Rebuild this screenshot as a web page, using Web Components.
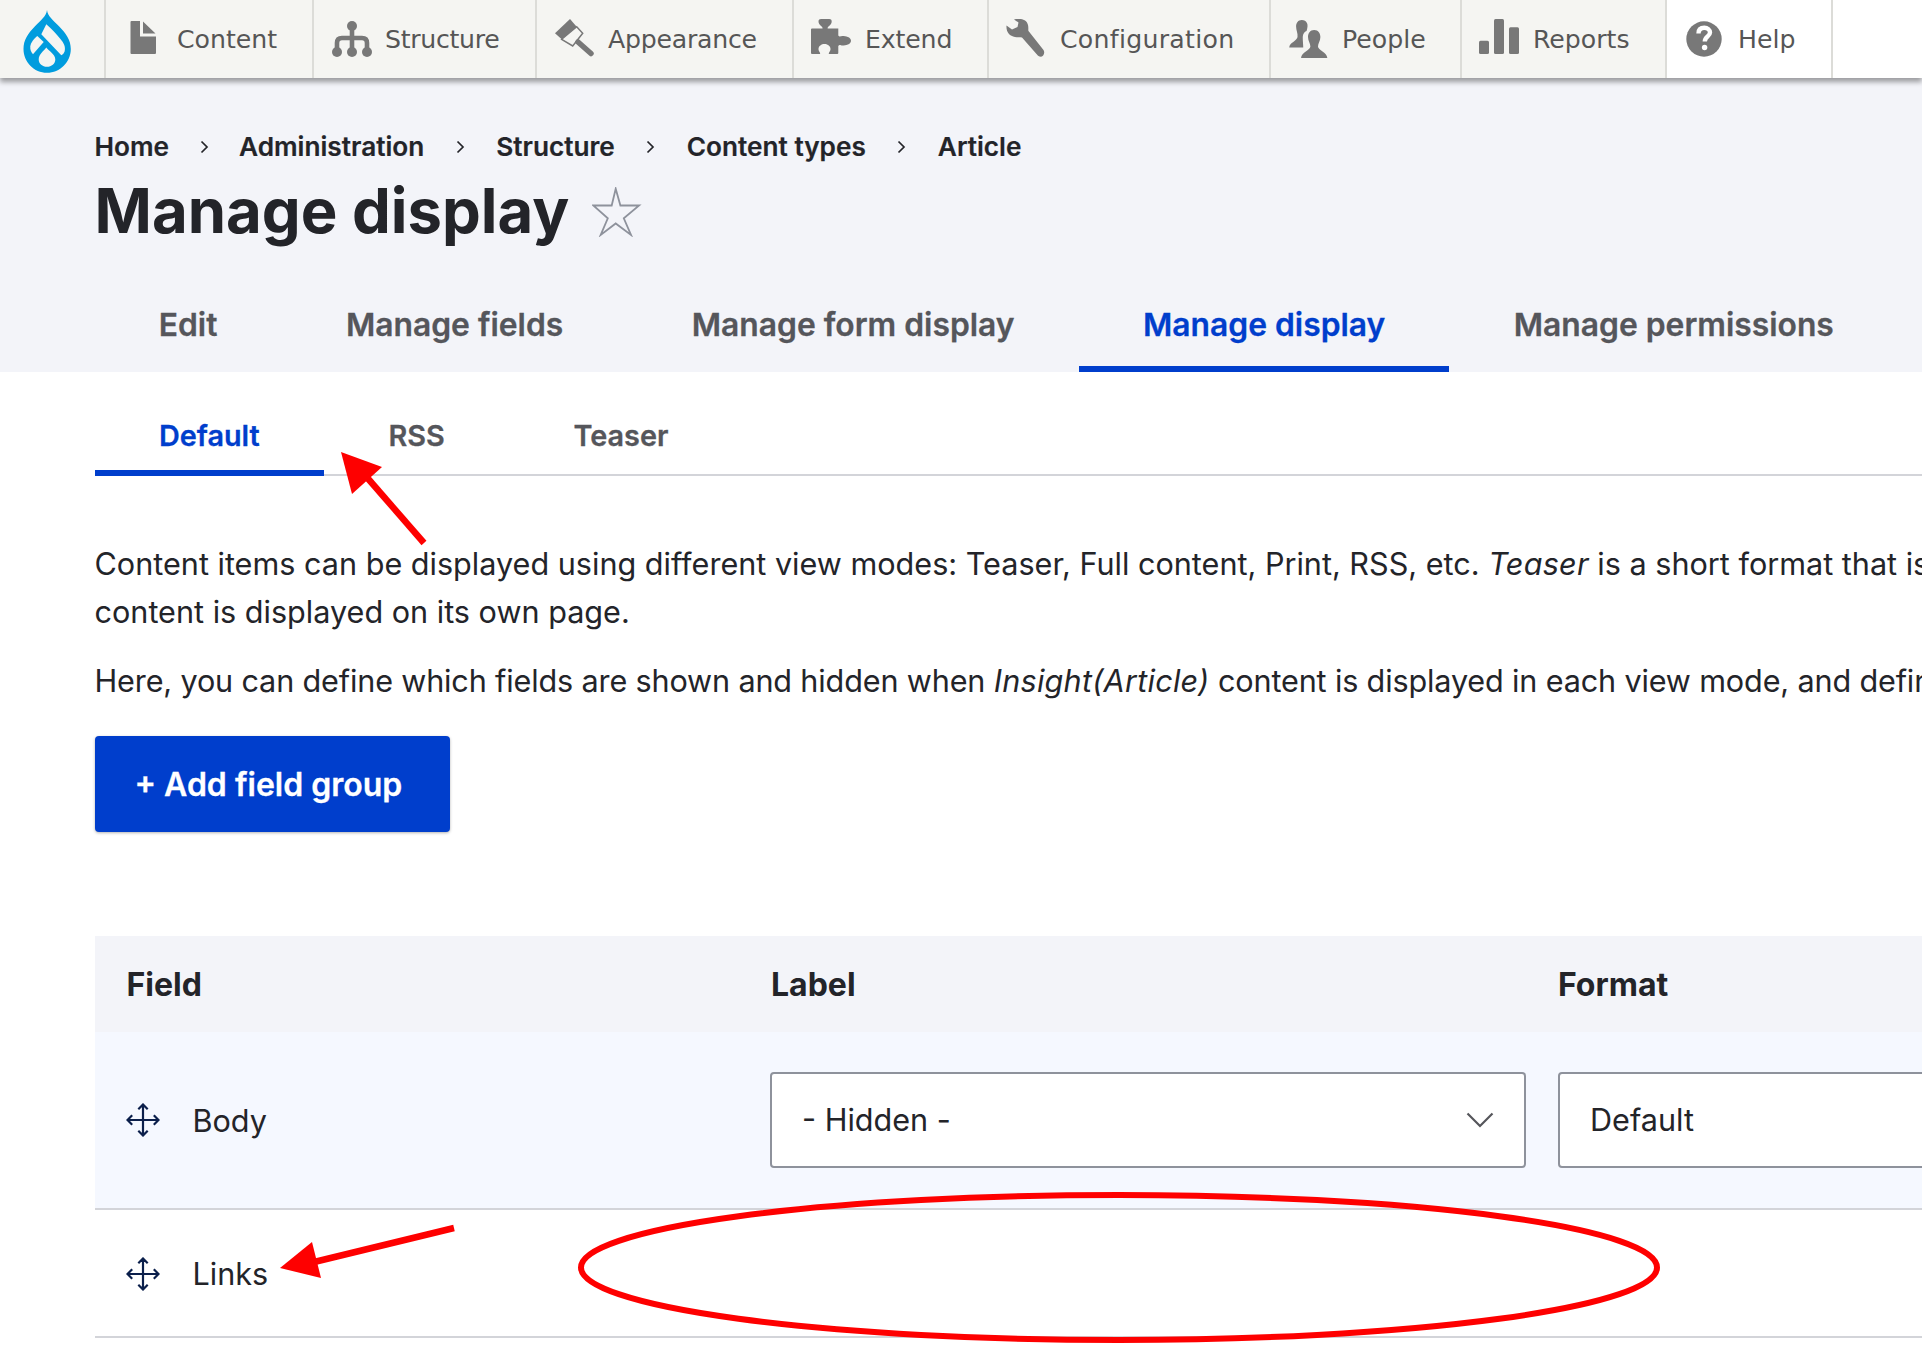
<!doctype html>
<html lang="en"><head><meta charset="utf-8"><title>Manage display</title>
<style>
html,body{margin:0;padding:0;width:1922px;height:1352px;overflow:hidden;background:#fff}
body{font-family:Inter,"Liberation Sans",sans-serif;color:#232429;position:relative}
</style></head><body>
<drupal-page>
  <admin-toolbar>
    <toolbar-logo></toolbar-logo>
    <toolbar-item w="208">
      <svg slot="icon" viewBox="0 0 40 78"><path d="M8.5 21H17V36.5H33V53Q33 54 32 54H8.5Q7.5 54 7.5 53V22Q7.5 21 8.5 21ZM20 21.5L32.5 33.5H20Z"/></svg>Content</toolbar-item>
    <toolbar-item w="223" ls="-.3">
      <svg slot="icon" viewBox="0 0 40 78"><g fill="none" stroke="#787878" stroke-width="4.6"><path d="M21 26V52M6 52V43Q6 38 11 38H31Q36 38 36 43V52"/></g><circle cx="21" cy="26" r="5"/><circle cx="6" cy="52" r="5"/><circle cx="21" cy="52" r="5"/><circle cx="36" cy="52" r="5"/></svg>Structure</toolbar-item>
    <toolbar-item w="257" ls="-.25">
      <svg slot="icon" viewBox="0 0 40 78"><path d="M1 33.3L16 19L22.7 26.7L7.7 39.3Z"/><path d="M7.7 39.3L22.7 26.7L28.7 33.3L18.7 46Z" fill="none" stroke="#787878" stroke-width="1.5"/><path d="M24 42L37 53.5" fill="none" stroke="#787878" stroke-width="5.5" stroke-linecap="round"/></svg>Appearance</toolbar-item>
    <toolbar-item w="195" ls="-.15">
      <svg slot="icon" viewBox="0 0 40 78"><path d="M1 28.5H11.6C11.6 26 7.5 25.5 7.5 21.3C7.5 19.8 8.6 19 10 19H18.3C19.7 19 20.7 19.9 20.7 21.3C20.7 25.5 16.6 26 16.6 28.5H27.3V35.5C28.5 37.2 29.5 36 31.5 36C34.5 36 40 37 40 40.7C40 44.5 34.5 45.5 31.5 45.5C29.5 45.5 28.5 44 27.3 46V53Q27.3 54 26.3 54H18C17 53 19.5 51.5 19.5 49C19.5 45.5 16 44 13.5 44C10.5 44 7.5 46 7.5 49C7.5 51.5 10 53 9 54H1Q0 54 0 53V29.5Q0 28.5 1 28.5Z"/></svg>Extend</toolbar-item>
    <toolbar-item w="282" ls=".28">
      <svg slot="icon" viewBox="0 0 40 78"><path d="M13 19C16 18.8 21 20 22 25C22.7 28 22 30 22.5 31L37.5 50C39.5 53 37 57.5 33.5 56.5C32 56 31.5 55 30.5 54L16 37.5C14 37 12 37.5 9 37C3.5 36 0 32 .5 25.5L6 29.5L11.5 27L12.5 22.5L8 19.5C9.5 19 11.5 18.9 13 19Z"/></svg>Configuration</toolbar-item>
    <toolbar-item w="191">
      <svg slot="icon" viewBox="0 0 42 78"><path d="M14.5 19C10.5 19 8.5 22 8.5 26C8.5 30 10.5 33 10 37C9.5 41 1.5 43 1.3 48H16C16 45 15.5 41 15.5 38C15.5 35 16 32 19.5 30.5C20.5 27.5 21 24 20 22.5C19 20 17 19 14.5 19Z"/><path d="M27.5 29.5C23 29.5 21 33 21 37C21 41 23.5 44 23.5 47C23.5 51 14 53 13.7 59H41.3C41 53 31.5 51 31.5 47C31.5 44 34 41 34 37C34 33 32 29.5 27.5 29.5Z"/></svg>People</toolbar-item>
    <toolbar-item w="205">
      <svg slot="icon" viewBox="0 0 40 78"><rect x="0" y="40.7" width="10" height="13.3" rx="1.5"/><rect x="15" y="19" width="10" height="35" rx="1.5"/><rect x="30" y="27.3" width="10" height="26.7" rx="1.5"/></svg>Reports</toolbar-item>
    <toolbar-item w="166" light>
      <svg slot="icon" viewBox="0 0 40 78"><circle cx="20" cy="39" r="17.7"/><path d="M14.5 33.5C14.5 29.5 17 27.8 20.3 27.8C23.5 27.8 26 29.7 26 32.6C26 36.4 20.8 36.6 20.8 41.5" fill="none" stroke="#fff" stroke-width="4.4"/><circle cx="20.6" cy="47.5" r="2.7" fill="#fff"/></svg>Help</toolbar-item>
  </admin-toolbar>

  <page-header>
    <crumb-trail>
      <crumb-link first>Home</crumb-link><crumb-link>Administration</crumb-link><crumb-link>Structure</crumb-link><crumb-link>Content types</crumb-link><crumb-link last>Article</crumb-link>
    </crumb-trail>
    <page-title>Manage display</page-title>
    <tab-bar size="primary">
      <tab-link size="primary">Edit</tab-link><tab-link size="primary">Manage fields</tab-link><tab-link size="primary">Manage form display</tab-link><tab-link size="primary" active>Manage display</tab-link><tab-link size="primary">Manage permissions</tab-link>
    </tab-bar>
  </page-header>

  <page-body>
    <tab-bar size="secondary">
      <tab-link size="secondary" active>Default</tab-link><tab-link size="secondary">RSS</tab-link><tab-link size="secondary">Teaser</tab-link>
    </tab-bar>
    <help-text>Content items can be displayed using different view modes: Teaser, Full content, Print, RSS, etc. <em>Teaser</em> is a short format that is<br>content is displayed on its own page.</help-text>
    <help-text second>Here, you can define which fields are shown and hidden when <em>Insight(Article)</em> content is displayed in each view mode, and define</help-text>
    <action-button>+ Add field group</action-button>
    <field-table>
      <field-row head><span>Field</span><span slot="label" style="margin-left:1px">Label</span><span slot="format">Format</span></field-row>
      <field-row tall>
        <drag-label nudge>Body</drag-label>
        <select-box slot="label" chevron>- Hidden -</select-box>
        <select-box slot="format" wide>Default</select-box>
      </field-row>
      <field-row short><drag-label>Links</drag-label></field-row>
    </field-table>
  </page-body>
  <red-annotations></red-annotations>
</drupal-page>

<script>
function def(name, css, html, extra){
  const t=document.createElement('template');
  t.innerHTML='<style>'+css+'</style>'+html;
  customElements.define(name,class extends HTMLElement{
    constructor(){super();this.attachShadow({mode:'open'}).appendChild(t.content.cloneNode(true));}
    connectedCallback(){if(extra)extra(this);}
  });
}
def('drupal-page',':host{display:block;width:1922px;height:1352px;position:relative;overflow:hidden}','<slot></slot>');

def('admin-toolbar',
 ':host{display:flex;height:78px;background:#fff;position:relative;z-index:2;box-shadow:0 4px 5px rgba(0,0,0,.36);font-family:"DejaVu Sans",sans-serif;font-size:25.2px;color:#565656}',
 '<slot></slot>');
def('toolbar-logo',':host{display:block;flex:none;width:106px;height:78px;box-sizing:border-box;border-right:2px solid #dcdcd8;background:#f5f5f2}svg{display:block}',
 `<svg width="104" height="78" viewBox="0 0 104 78"><path fill="#009cde" d="M47 10C47.6 16 53 20 59 26.3C66 33.5 70.8 40 70.8 49C70.8 62 60 72.8 47 72.8C34 72.8 23.5 62 23.5 49C23.5 40 28 33.5 35 26.3C41 20 46.4 16 47 10Z"/><path fill="#f5f5f2" d="M41.3 34.3L46.3 24.3C51 28.5 56 33.5 60 38.5C64 43 65.8 47 64.6 51.5C64 53 63 54.5 61.3 55.3Z"/><path fill="#f5f5f2" d="M37.3 36L43.7 42L33 54.3C31 52 30 49.5 30.3 46.5C30.7 42.5 34 38.8 37.3 36Z"/><path fill="#f5f5f2" d="M46.3 47.6C48.5 50.5 55.3 54.5 55.3 59.5C55.3 63.8 51.5 66.8 47 66.8C42.5 66.8 38.7 63.8 38.7 59.5C38.7 54.5 44 50.5 46.3 47.6Z"/></svg>`);
def('toolbar-item',
 ':host{display:flex;flex:none;align-items:center;box-sizing:border-box;height:78px;padding-left:17px;padding-top:1px;border-right:2px solid #dcdcd8;background:#f5f5f2;white-space:nowrap}:host([light]){background:#fff}.i{flex:none;width:40px;height:78px;margin:-1px 14px 0 0}::slotted(svg){display:block;height:78px;width:40px;overflow:visible;fill:#787878}',
 '<span class="i"><slot name="icon"></slot></span><slot></slot>',
 el=>{el.style.width=el.getAttribute('w')+'px';if(el.hasAttribute('ls'))el.style.letterSpacing=el.getAttribute('ls')+'px';});

def('page-header',':host{display:block;height:294px;box-sizing:border-box;background:#f3f4f9;padding:48.5px 0 0 94.5px;overflow:hidden}','<slot></slot>');
def('crumb-trail',':host{display:flex;height:40px;align-items:center;font-size:26.2px;font-weight:600;line-height:40px;color:#232429;-webkit-text-stroke:.2px #232429}','<slot></slot>');
def('crumb-link',':host{display:flex;align-items:center;white-space:nowrap}.s{display:flex;width:72px;justify-content:center}:host([first]) .s{width:70px}:host([last]) .s{display:none}svg{display:block}',
 '<slot></slot><span class="s"><svg width="9" height="14" viewBox="0 0 9 14"><path d="M1.5 1.5L7 7L1.5 12.5" fill="none" stroke="#232429" stroke-width="1.7"/></svg></span>');
def('page-title',':host{display:flex;align-items:center;margin-top:5px;height:78px;font-size:61.6px;font-weight:700;line-height:78px;color:#232429;white-space:nowrap}svg{display:block;margin:2px 0 0 23px;flex:none}',
 `<slot></slot><svg width="50" height="50" viewBox="0 0 50 50"><path d="M23.7 1.8L28.4 18.5H47.1L31.8 31.3L39 47.9L23.7 36.5L8.7 47.9L15.8 31.3L1.3 18.5H19.7Z" fill="none" stroke="#8e929c" stroke-width="1.8" stroke-linejoin="miter"/></svg>`);
def('tab-bar',':host{display:flex;white-space:nowrap}:host([size=primary]){margin-top:26.5px;height:96px}:host([size=secondary]){height:80px;box-sizing:border-box;box-shadow:inset 0 -2px 0 #d3d4d9}','<slot></slot>');
def('tab-link',':host{display:flex;align-items:center;flex:none;box-sizing:border-box;color:#55565b;font-weight:600;padding:0 64.25px;-webkit-text-stroke:.3px currentColor}:host([size=primary]){font-size:31.8px;height:96px}:host([size=secondary]){font-size:28.8px;height:80px;padding:0 64.4px 2px}:host([active]){color:#003ecc;box-shadow:inset 0 -6px 0 #003ecc}','<slot></slot>');

def('page-body',':host{display:block;padding:24px 0 0 94.5px;font-size:30.6px}','<slot></slot>');
def('help-text',':host{display:block;margin-top:64px;line-height:48px;white-space:nowrap;color:#232429}:host([second]){margin-top:20.5px;letter-spacing:-.15px}::slotted(em){letter-spacing:.25px}','<slot></slot>');
def('action-button',':host{display:inline-flex;align-items:center;height:96px;box-sizing:border-box;margin-top:31.5px;padding:0 40px;width:355px;background:#003ecc;color:#fff;font-size:32px;font-weight:600;border-radius:4px;box-shadow:0 1px 3px rgba(0,0,0,.3);white-space:nowrap;-webkit-text-stroke:.3px #fff}','<slot></slot>');
def('field-table',':host{display:block;margin-top:104px}','<slot></slot>');
def('field-row',
 ':host{display:grid;grid-template-columns:643.5px 788px 1fr;align-items:center;box-sizing:border-box}:host([head]){height:96px;background:#f3f4f9;font-weight:700;font-size:32px}:host([tall]){height:177.5px;background:#f5f8ff;border-bottom:2px solid #d3d4d9}:host([short]){height:128.5px;padding-top:2px;border-bottom:2px solid #d3d4d9}.c{padding-left:32px;display:flex;align-items:center}',
 '<div class="c"><slot></slot></div><div class="c"><slot name="label"></slot></div><div class="c"><slot name="format"></slot></div>');
def('drag-label',':host{display:flex;align-items:center}svg{display:block;margin:0 33px 0 -1px;flex:none}:host([nudge]) .t{padding-top:2px}',
 `<svg width="34" height="34" viewBox="0 0 34 34"><path d="M17 1.5V32.5M1.5 17H32.5M12.3 6.2L17 1.5L21.7 6.2M12.3 27.8L17 32.5L21.7 27.8M6.2 12.3L1.5 17L6.2 21.7M27.8 12.3L32.5 17L27.8 21.7" fill="none" stroke="#0b1f4b" stroke-width="2.2"/></svg><span class="t"><slot></slot></span>`);
def('select-box',':host{display:flex;align-items:center;position:relative;box-sizing:border-box;height:96px;width:756px;border:2px solid #8e929c;border-radius:4px;background:#fff;padding-left:30px;color:#232429;white-space:nowrap}:host([wide]){width:420px}svg{display:none;position:absolute;right:30px;top:38px}:host([chevron]) svg{display:block}',
 '<slot></slot><svg width="28" height="16" viewBox="0 0 28 16"><path d="M1.5 1.5L14 14L26.5 1.5" fill="none" stroke="#55565b" stroke-width="2.2"/></svg>');
def('red-annotations',':host{position:absolute;left:0;top:0;z-index:5;width:1922px;height:1352px;pointer-events:none}svg{display:block}',
 `<svg width="1922" height="1352" viewBox="0 0 1922 1352"><ellipse cx="1119" cy="1267.5" rx="538" ry="72.5" fill="none" stroke="#fe0000" stroke-width="6"/><path d="M424 543L364 474" fill="none" stroke="#fe0000" stroke-width="6.5"/><path d="M341 452L382 467L352 494Z" fill="#fe0000"/><path d="M454 1228L310 1263" fill="none" stroke="#fe0000" stroke-width="6.5"/><path d="M280 1268L312 1242L321 1278Z" fill="#fe0000"/></svg>`);
</script>
</body></html>
